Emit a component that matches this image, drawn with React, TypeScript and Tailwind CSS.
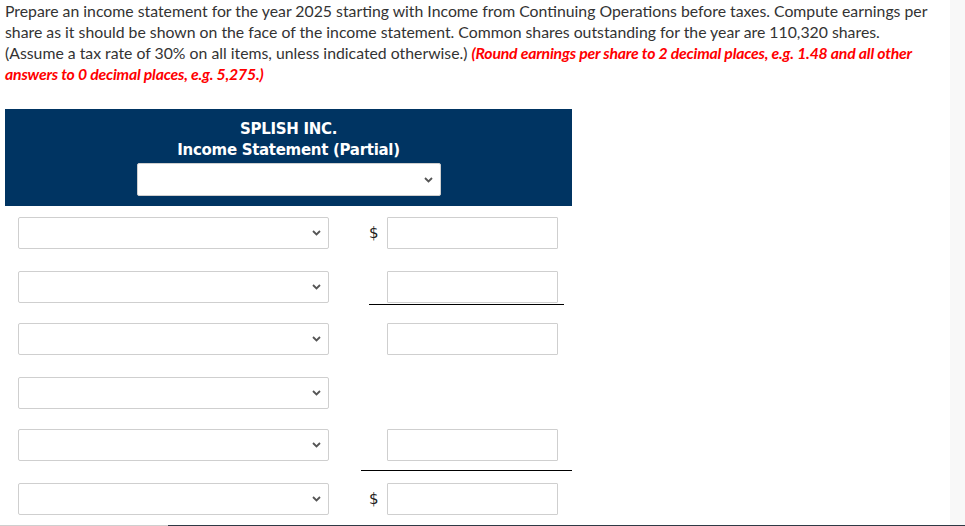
import React from "react";

function Chevron() {
  return (
    <svg width="9" height="6" viewBox="0 0 9 6" className="absolute right-[7px] top-1/2 -translate-y-1/2">
      <path d="M1 1l3.5 3.5L8 1" fill="none" stroke="#555" strokeWidth="1.8" />
    </svg>
  );
}

function Dropdown({ className }: { className: string }) {
  return (
    <div className={`relative h-[32px] bg-white border border-[#cfcfcf] rounded-[2px] ${className}`}>
      <Chevron />
    </div>
  );
}

function Amount({ dollar }: { dollar?: boolean }) {
  return (
    <div className="flex items-center h-[32px]">
      <span className="w-[8px] text-[15px] text-[#222] font-['DejaVu_Sans',sans-serif] leading-none">
        {dollar ? "$" : ""}
      </span>
      <div className="ml-[10px] w-[171px] h-[32px] border border-[#cfcfcf] rounded-[1px] bg-white" />
    </div>
  );
}

export default function App() {
  return (
    <div className="w-[965px] h-[526px] flex flex-col overflow-hidden bg-white">
      <div className="h-[525px] flex">
        <div className="w-[950px] h-full flex flex-col">
          <p className="pl-[5px] text-[15.8px] leading-[21px] text-[#333] font-['Lato',sans-serif] whitespace-nowrap">
            Prepare an income statement for the year 2025 starting with Income from Continuing Operations before taxes. Compute earnings per
            <br />
            share as it should be shown on the face of the income statement. Common shares outstanding for the year are 110,320 shares.
            <br />
            (Assume a tax rate of 30% on all items, unless indicated otherwise.){" "}
            <span className="font-bold italic text-[#f00] tracking-[-0.2px]">
              (Round earnings per share to 2 decimal places, e.g. 1.48 and all other
              <br />
              answers to 0 decimal places, e.g. 5,275.)
            </span>
          </p>

          <div className="ml-[5px] w-[567px] mt-[25px]">
            <div className="h-[97px] bg-[#003462] flex flex-col items-center pt-[10px] text-white font-bold text-[15px] leading-[21px] font-['DejaVu_Sans',sans-serif]">
              <div className="tracking-[-0.3px]">SPLISH INC.</div>
              <div className="tracking-[-0.3px]">Income Statement (Partial)</div>
              <Dropdown className="w-[304px] h-[33px] mt-[2px]" />
            </div>

            {/* row 1 */}
            <div className="flex mt-[11px]">
              <Dropdown className="ml-[13px] w-[311px]" />
              <div className="ml-[40px]">
                <Amount dollar />
              </div>
            </div>

            {/* row 2 */}
            <div className="flex mt-[22px]">
              <Dropdown className="ml-[13px] w-[311px]" />
              <div className="ml-[40px] w-[195px] border-b border-black pb-[1px]">
                <Amount />
              </div>
            </div>

            {/* row 3 */}
            <div className="flex mt-[18px]">
              <Dropdown className="ml-[13px] w-[311px]" />
              <div className="ml-[40px]">
                <Amount />
              </div>
            </div>

            {/* row 4 */}
            <div className="flex mt-[22px]">
              <Dropdown className="ml-[13px] w-[311px]" />
            </div>

            {/* row 5 */}
            <div className="flex mt-[20px]">
              <Dropdown className="ml-[13px] w-[311px]" />
              <div className="ml-[32px] w-[211px] pl-[8px] pb-[9px] border-b border-black">
                <Amount />
              </div>
            </div>

            {/* row 6 */}
            <div className="flex mt-[12px]">
              <Dropdown className="ml-[13px] w-[311px]" />
              <div className="ml-[40px]">
                <Amount dollar />
              </div>
            </div>
          </div>
        </div>
        <div className="w-[15px] h-full bg-[#f8f8f8]" />
      </div>
      <div className="h-[1px] flex">
        <div className="w-[168px] bg-[#cfcfcf]" />
        <div className="flex-1 bg-[#2f3a45]" />
      </div>
    </div>
  );
}
